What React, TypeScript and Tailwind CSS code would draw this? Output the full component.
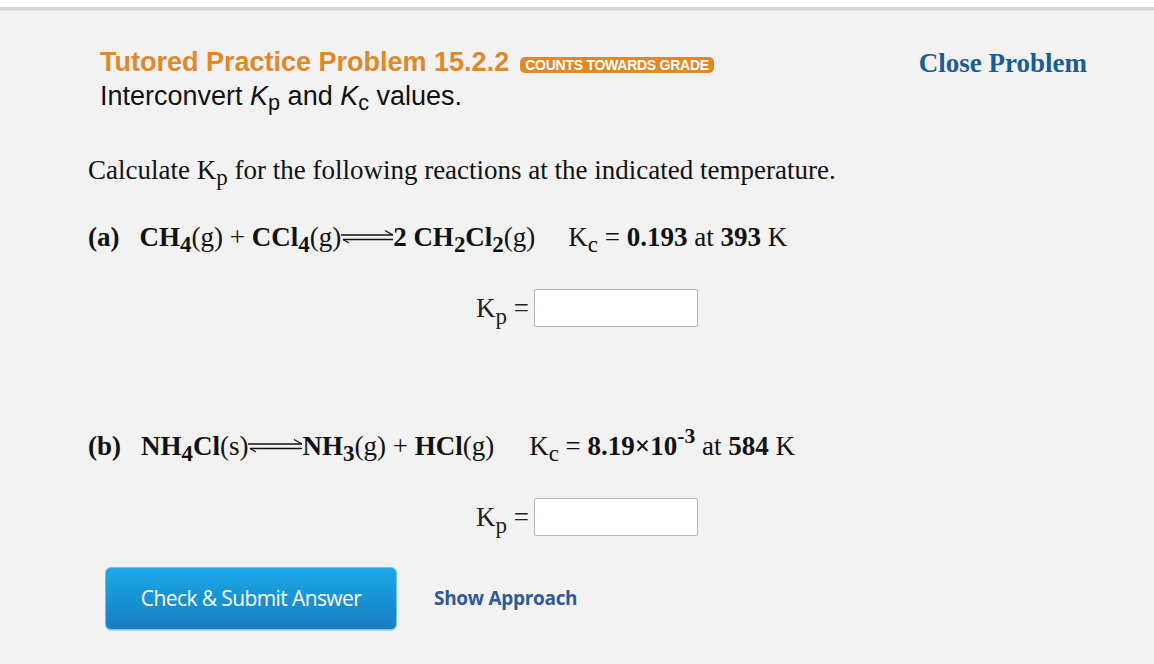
import React from "react";

const serif = { fontFamily: '"Liberation Serif", "Times New Roman", serif' };
const sans = { fontFamily: '"Liberation Sans", Arial, sans-serif' };

function EqArrow({ width = 56 }: { width?: number }) {
  // equilibrium harpoons: top one to the right, bottom one to the left
  return (
    <svg width={width} height="16" viewBox={`0 0 ${width} 16`} className="inline-block align-middle -mx-[2px]">
      <line x1="2" y1="6" x2={width - 2} y2="6" stroke="#111" strokeWidth="1.6" />
      <line x1={width - 2} y1="6" x2={width - 10} y2="1.5" stroke="#111" strokeWidth="1.4" />
      <line x1="4" y1="10.5" x2={width - 2} y2="10.5" stroke="#111" strokeWidth="1.6" />
      <line x1="4" y1="10.5" x2="10" y2="14" stroke="#111" strokeWidth="1.2" />
    </svg>
  );
}

function Sub({ children, bold = false }: { children: React.ReactNode; bold?: boolean }) {
  return <sub className={`text-[0.85em] ${bold ? "font-bold" : "font-normal"}`}>{children}</sub>;
}

function KpInput() {
  return (
    <div className="flex items-center gap-[5px] pl-[476px] text-[27px] leading-[30px] text-[#222]" style={serif}>
      <span>
        K<sub className="text-[0.85em] relative -bottom-[0.3em]">p</sub> =
      </span>
      <input
        type="text"
        className="w-[164px] h-[38px] bg-white border border-[#b8b8b8] rounded-[2px] outline-none"
      />
    </div>
  );
}

export default function App() {
  return (
    <div className="min-h-[664px] bg-white">
      <div className="h-[7px] bg-white" />
      <div className="h-[3px] bg-[#d4d4d4]" />
      <div className="h-[1px] bg-[#e6e6e6]" />
      <div className="bg-[#f2f2f2] h-[653px] relative">
        <div className="flex justify-between pl-[100px] pr-[67px] pt-[37px]">
          <div>
            <div className="flex items-center gap-[11px]" style={sans}>
              <span className="text-[#e0882a] text-[27px] font-bold leading-[28px] tracking-[0px]">
                Tutored Practice Problem 15.2.2
              </span>
              <span
                className="bg-[#e0882a] text-white text-[14px] font-bold leading-[16px] px-[5px] rounded-[5px] mt-[5px] tracking-[-0.25px]"
                style={{ fontFamily: '"Liberation Sans Narrow", "Liberation Sans", Arial, sans-serif' }}
              >
                COUNTS TOWARDS GRADE
              </span>
            </div>
            <div className="text-[#111] text-[27px] leading-[30px] mt-[5px]" style={sans}>
              Interconvert <i>K</i>
              <sub className="text-[0.8em]">p</sub> and <i>K</i>
              <sub className="text-[0.8em]">c</sub> values.
            </div>
          </div>
          <a className="text-[#1b5c94] text-[27px] font-bold leading-[28px] mt-[1px] cursor-pointer" style={serif}>
            Close Problem
          </a>
        </div>

        <div className="pl-[88px] mt-[43px] text-[#111] text-[27px] leading-[32px]" style={serif}>
          Calculate K<Sub>p</Sub> for the following reactions at the indicated temperature.
        </div>

        <div className="pl-[88px] mt-[35px] text-[#111] text-[27px] leading-[32px] flex items-center" style={serif}>
          <span className="font-bold">(a)</span>
          <span className="ml-[20px] font-bold">
            CH<Sub bold>4</Sub>
            <span className="font-normal">(g) + </span>CCl<Sub bold>4</Sub>
            <span className="font-normal">(g)</span>
          </span>
          <EqArrow width={56} />
          <span className="font-bold">
            2 CH<Sub bold>2</Sub>Cl<Sub bold>2</Sub>
            <span className="font-normal">(g)</span>
          </span>
          <span className="ml-[33px]">
            K<Sub>c</Sub> = <b>0.193</b> at <b>393</b> K
          </span>
        </div>

        <div className="mt-[36px]">
          <KpInput />
        </div>

        <div className="pl-[88px] mt-[103px] text-[#111] text-[27px] leading-[32px] flex items-center" style={serif}>
          <span className="font-bold">(b)</span>
          <span className="ml-[20px] font-bold">
            NH<Sub bold>4</Sub>Cl<span className="font-normal">(s)</span>
          </span>
          <EqArrow width={58} />
          <span className="font-bold">
            NH<Sub bold>3</Sub>
            <span className="font-normal">(g) + </span>HCl<span className="font-normal">(g)</span>
          </span>
          <span className="ml-[35px]">
            K<Sub>c</Sub> = <b>8.19×10</b>
            <sup className="font-bold text-[0.8em] -top-[0.55em]">-3</sup> at <b>584</b> K
          </span>
        </div>

        <div className="mt-[36px]">
          <KpInput />
        </div>

        <div className="flex items-center pl-[105px] mt-[31px]">
          <button
            className="w-[292px] h-[63px] rounded-[6px] text-white text-[21px] tracking-[-0.6px] border border-[#6fc3ee] bg-gradient-to-b from-[#1ba9e8] to-[#167dc0] shadow-[0_1px_1px_rgba(0,0,0,0.15)]"
            style={{ fontFamily: '"Open Sans", "Noto Sans", sans-serif' }}
          >
            Check &amp; Submit Answer
          </button>
          <a
            className="ml-[37px] text-[#2e5a98] text-[19px] font-bold tracking-[-0.3px] cursor-pointer"
            style={{ fontFamily: '"Open Sans", "Noto Sans", sans-serif' }}
          >
            Show Approach
          </a>
        </div>
      </div>
    </div>
  );
}
